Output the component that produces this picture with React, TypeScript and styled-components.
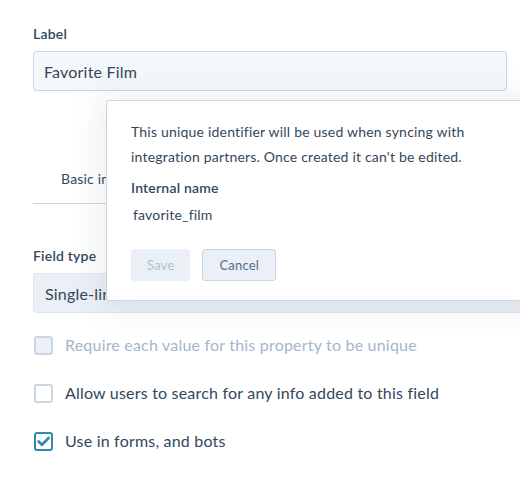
import styled, { createGlobalStyle } from 'styled-components';

const GlobalStyle = createGlobalStyle`
  html, body {
    margin: 0;
    padding: 0;
    background: #ffffff;
    overflow: hidden;
  }
  body {
    font-family: Lato, "Noto Sans", sans-serif;
    color: #33475b;
    letter-spacing: 0.2px;
    -webkit-font-smoothing: antialiased;
  }
`;

const Page = styled.div`
  position: relative;
  width: 520px;
  height: 488px;
  padding: 24px 0 0 33px;
  box-sizing: border-box;
`;

const FieldLabel = styled.div<{ $gap?: number }>`
  font-size: 14px;
  line-height: 20px;
  font-weight: 600;
  margin-top: ${(p) => p.$gap ?? 0}px;
  margin-bottom: 7px;
`;

const TextInput = styled.div`
  width: 474px;
  height: 40px;
  box-sizing: border-box;
  display: flex;
  align-items: center;
  padding-left: 10px;
  background: #f5f8fa;
  border: 1px solid #cbd6e2;
  border-radius: 3px;
  font-size: 16px;
`;

const Tabs = styled.div`
  display: flex;
  width: 474px;
  margin-top: 69px;
  border-bottom: 1px solid #cbd6e2;
`;

const Tab = styled.div`
  padding: 10px 28px 15px;
  font-size: 14px;
  line-height: 18px;
`;

const Select = styled.div`
  width: 500px;
  height: 40px;
  box-sizing: border-box;
  display: flex;
  align-items: center;
  padding-left: 11px;
  background: #eaf0f6;
  border: 1px solid #dfe6ee;
  border-radius: 3px;
  font-size: 16px;
`;

const Options = styled.div`
  display: flex;
  flex-direction: column;
  gap: 28px;
  margin-top: 22px;
`;

const OptionRow = styled.label<{ $disabled?: boolean }>`
  display: flex;
  align-items: center;
  gap: 12px;
  font-size: 16px;
  line-height: 20px;
  color: ${(p) => (p.$disabled ? '#a5b6c9' : '#33475b')};
  padding-left: 1px;
`;

const Box = styled.span<{ $state: 'disabled' | 'off' | 'on' }>`
  width: 19px;
  height: 19px;
  box-sizing: border-box;
  border-radius: 3px;
  display: flex;
  align-items: center;
  justify-content: center;
  background: ${(p) => (p.$state === 'disabled' ? '#eaf0f6' : '#ffffff')};
  border: ${(p) => (p.$state === 'on' ? '2px solid #2e8cab' : '2px solid #cbd6e2')};
`;

const Popover = styled.div`
  position: absolute;
  left: 106px;
  top: 100px;
  width: 440px;
  height: 201px;
  box-sizing: border-box;
  padding: 18px 24px 0;
  background: #ffffff;
  border: 1px solid #cbd6e2;
  border-radius: 3px;
  box-shadow: 0 2px 32px 6px rgba(45, 62, 80, 0.09);
`;

const HelpText = styled.p`
  margin: 0;
  font-size: 14px;
  line-height: 25px;
`;

const PopLabel = styled.div`
  margin-top: 9px;
  font-size: 14px;
  line-height: 20px;
  font-weight: 600;
`;

const PopValue = styled.div`
  margin-top: 7px;
  padding-left: 2px;
  font-size: 14px;
  line-height: 20px;
`;

const Actions = styled.div`
  display: flex;
  gap: 12px;
  margin-top: 24px;
`;

const Button = styled.button<{ $disabled?: boolean }>`
  height: 32px;
  padding: 0 ${(p) => (p.$disabled ? 15 : 16)}px;
  font-family: inherit;
  font-size: 13px;
  letter-spacing: 0.2px;
  border-radius: 3px;
  background: #eaf0f6;
  border: 1px solid ${(p) => (p.$disabled ? '#eaf0f6' : '#cbd6e2')};
  color: ${(p) => (p.$disabled ? '#b0c1d4' : '#506e91')};
`;

const Check = () => (
  <svg width="13" height="13" viewBox="0 0 13 13">
    <path d="M1.6 6.6 L5 9.8 L11.4 3.1" fill="none" stroke="#2e8cab" strokeWidth="2.8" strokeLinecap="round" strokeLinejoin="round" />
  </svg>
);

export default function App() {
  return (
    <>
      <GlobalStyle />
      <Page>
        <FieldLabel>Label</FieldLabel>
        <TextInput>Favorite Film</TextInput>

        <Tabs>
          <Tab>Basic info</Tab>
        </Tabs>

        <FieldLabel $gap={42}>Field type</FieldLabel>
        <Select>Single-line text</Select>

        <Options>
          <OptionRow $disabled>
            <Box $state="disabled" />
            Require each value for this property to be unique
          </OptionRow>
          <OptionRow>
            <Box $state="off" />
            Allow users to search for any info added to this field
          </OptionRow>
          <OptionRow>
            <Box $state="on">
              <Check />
            </Box>
            Use in forms, and bots
          </OptionRow>
        </Options>

        <Popover>
          <HelpText>
            This unique identifier will be used when syncing with
            <br />
            integration partners. Once created it can't be edited.
          </HelpText>
          <PopLabel>Internal name</PopLabel>
          <PopValue>favorite_film</PopValue>
          <Actions>
            <Button $disabled>Save</Button>
            <Button>Cancel</Button>
          </Actions>
        </Popover>
      </Page>
    </>
  );
}
